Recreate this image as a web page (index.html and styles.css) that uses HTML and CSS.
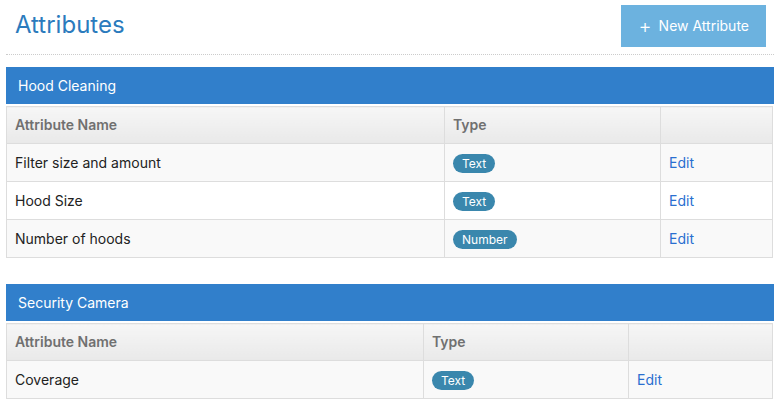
FILE: index.html
```html
<!DOCTYPE html>
<html lang="en">
<head>
  <meta charset="UTF-8" />
  <title>Attributes</title>
  <link rel="stylesheet" href="styles.css">
</head>
<body>
  <div class="page">
    <div class="page-header">
      <h1>Attributes</h1>
      <button class="btn-new"><span class="plus">+</span> New Attribute</button>
    </div>

    <div class="panel">
      <div class="panel-heading">Hood Cleaning</div>
      <table class="attr-table">
        <thead>
          <tr><th class="col-name">Attribute Name</th><th class="col-type">Type</th><th class="col-act"></th></tr>
        </thead>
        <tbody>
          <tr><td>Filter size and amount</td><td><span class="label">Text</span></td><td><a href="#">Edit</a></td></tr>
          <tr><td>Hood Size</td><td><span class="label">Text</span></td><td><a href="#">Edit</a></td></tr>
          <tr><td>Number of hoods</td><td><span class="label">Number</span></td><td><a href="#">Edit</a></td></tr>
        </tbody>
      </table>
    </div>

    <div class="panel">
      <div class="panel-heading">Security Camera</div>
      <table class="attr-table narrow">
        <thead>
          <tr><th class="col-name">Attribute Name</th><th class="col-type">Type</th><th class="col-act"></th></tr>
        </thead>
        <tbody>
          <tr><td>Coverage</td><td><span class="label">Text</span></td><td><a href="#">Edit</a></td></tr>
        </tbody>
      </table>
    </div>
  </div>
</body>
</html>
```

FILE: styles.css
```css
body {
  margin: 0;
  font-family: Inter, 'Noto Sans', sans-serif;
  font-size: 14px;
  color: #222;
  background: #fff;
}
.page {
  padding: 5px 9px 0 6px;
}
.page-header {
  display: flex;
  justify-content: space-between;
  align-items: flex-start;
  border-bottom: 1px dotted #ccc;
  padding-bottom: 7px;
  margin-bottom: 12px;
}
h1 {
  margin: 5px 0 0 9px;
  font-size: 24px;
  font-weight: 400;
  color: #2b7bbd;
  line-height: 30px;
}
.btn-new {
  margin-right: 8px;
  height: 42px;
  padding: 0 17px 0 18px;
  border: none;
  background: #6cb2df;
  color: #fff;
  font-family: inherit;
  font-size: 14px;
}
.btn-new .plus {
  font-size: 20px;
  font-weight: 300;
  vertical-align: -2px;
  margin-right: 3px;
}
.panel {
  margin-bottom: 26px;
}
.panel-heading {
  background: #317fcb;
  color: #fff;
  height: 37px;
  line-height: 37px;
  padding: 0 12px;
  font-size: 14px;
  border-bottom: 2px solid #fff;
}
.attr-table {
  width: calc(100% - 1px);
  border-collapse: collapse;
  border: 1px solid #ddd;
}
.attr-table th,
.attr-table td {
  border: 1px solid #ddd;
  padding: 8px 8px;
  line-height: 21px;
  text-align: left;
  font-size: 14px;
}
.attr-table th {
  line-height: 20px;
  font-weight: 600;
  color: #707070;
  background: linear-gradient(#f6f6f6, #e9e9e9);
}
.attr-table tbody tr:nth-child(odd) td {
  background: #f9f9f9;
}
.attr-table .col-name { width: 421px; }
.attr-table .col-type { width: 199px; }
.attr-table.narrow .col-name { width: 400px; }
.attr-table.narrow .col-type { width: 188px; }
.label {
  display: inline-block;
  background: #3a87ad;
  color: #fff;
  font-size: 12px;
  line-height: 19px;
  padding: 0 9px;
  border-radius: 10px;
}
a {
  color: #2a6fd0;
  text-decoration: none;
}
```
